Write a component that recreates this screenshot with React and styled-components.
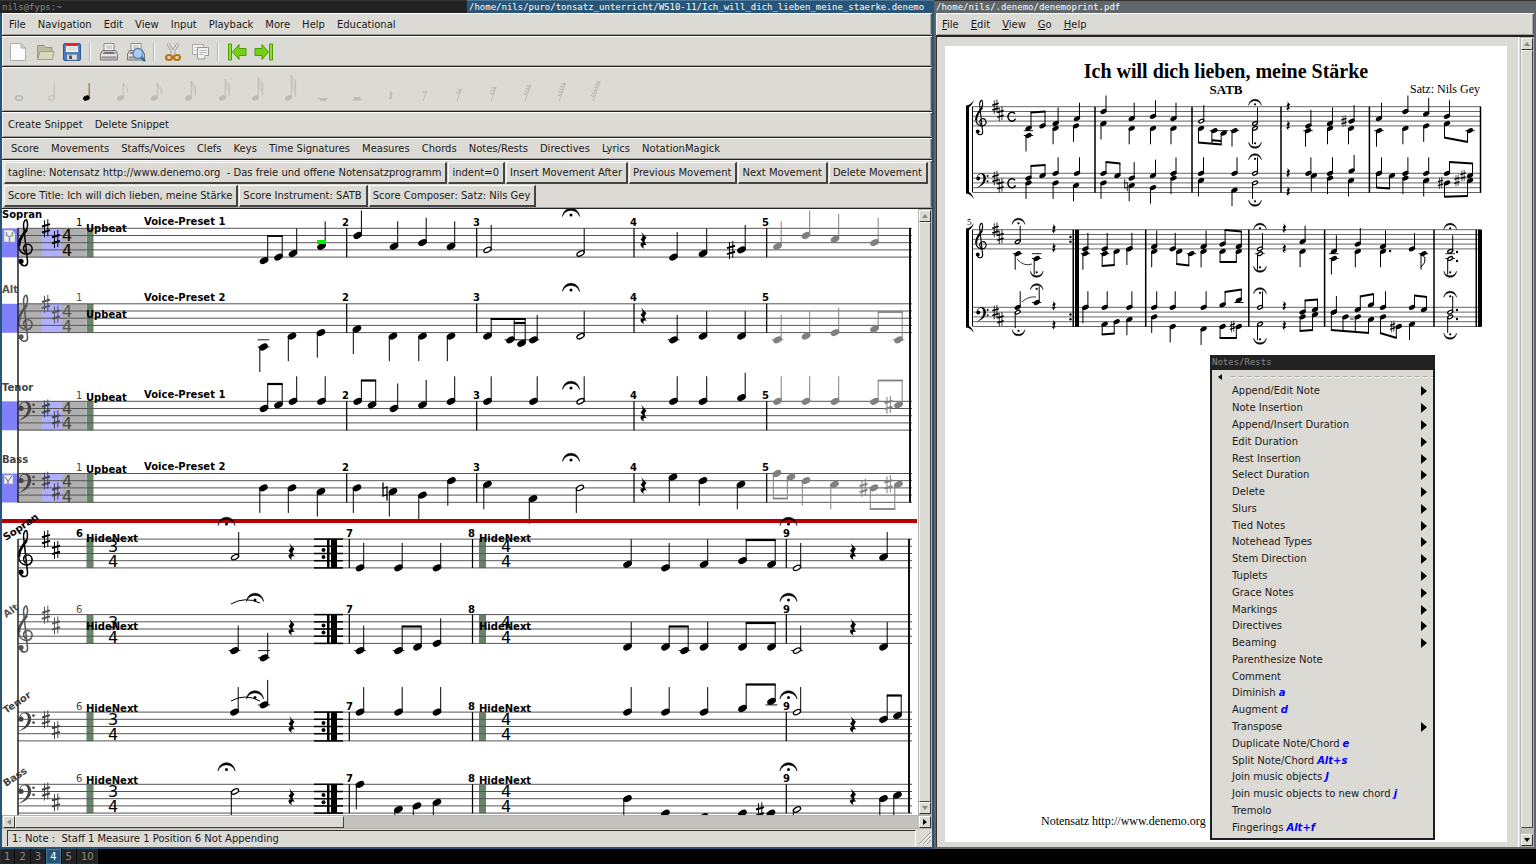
import React from "react";
import styled, { createGlobalStyle, css } from "styled-components";

const Global = createGlobalStyle`
  * { box-sizing: border-box; }
  html, body, #root { height: 100%; }
  body { margin: 0; background: #000; overflow: hidden; }
  button, input { font: inherit; color: inherit; }
`;

const FACE = "#dcdad5";
const UI = `"DejaVu Sans", Verdana, sans-serif`;

const Desktop = styled.div`
  position: relative;
  display: flex;
  flex-direction: column;
  height: 100vh;
  background: #000;
  color: #1a1a1a;
  font: 10px/14px ${UI};
`;
const Windows = styled.main`
  flex: 1;
  min-height: 0;
  display: grid;
  grid-template-columns: 934fr 602fr;
`;
const Pane = styled.section`
  min-width: 0;
  min-height: 0;
  display: flex;
  flex-direction: column;
`;
const Tabs = styled.div`
  display: flex;
  height: 13px;
  flex: none;
`;
const Tab = styled.div`
  flex: 1;
  min-width: 0;
  overflow: hidden;
  white-space: nowrap;
  padding-left: 2px;
  font: 9px/13px "DejaVu Sans Mono", monospace;
  background: ${(p) => p.$bg};
  color: ${(p) => p.$fg};
  border-top: 1px solid ${(p) => p.$edge};
`;
const Frame = styled.div`
  flex: 1;
  min-height: 0;
  display: flex;
  flex-direction: column;
  border: 2px solid ${(p) => p.$edge};
  border-top: 0;
  background: ${FACE};
`;
const bevel = css`
  border-top: 1px solid #fff;
  border-bottom: 1px solid #222;
  box-shadow: inset 1px 0 #f4f3f0, inset 0 -1px #a19f99, inset -1px 0 #5c5b58, inset -2px 0 #a9a7a1;
`;
const Bar = styled.div`
  ${bevel}
  flex: none;
  display: flex;
  align-items: center;
  height: ${(p) => p.$h}px;
  padding: 0 ${(p) => p.$pad ?? 2}px;
  overflow: hidden;
`;
const MenuButton = styled.button`
  border: 0;
  background: none;
  padding: 0 6px;
  line-height: 14px;
  white-space: nowrap;
`;
const ToolButton = styled.button`
  flex: none;
  width: ${(p) => p.$w || 27}px;
  height: 22px;
  border: 0;
  padding: 0;
  background: none;
  display: flex;
  align-items: center;
  justify-content: center;
`;
const Divider = styled.span`
  flex: none;
  width: 2px;
  height: 18px;
  margin: 0 4px;
  background: linear-gradient(90deg, #b3b1ab 50%, #fff 50%);
`;
const Directives = styled.div`
  ${bevel}
  flex: none;
  height: 49px;
  padding: 1px 0 0 2px;
  display: flex;
  flex-direction: column;
  overflow: hidden;
`;
const DirectiveRow = styled.div`
  display: flex;
  height: 23px;
`;
const DirectiveButton = styled.button`
  flex: none;
  height: 22px;
  padding: 0 4px 0 3px;
  margin-right: 1px;
  line-height: 18px;
  white-space: pre;
  background: ${FACE};
  border: 1px solid #fff;
  border-right: 2px solid #444;
  border-bottom: 2px solid #444;
`;
const ScoreArea = styled.div`
  flex: 1;
  min-height: 0;
  display: flex;
  background: #fff;
`;
const Canvas = styled.div`
  flex: 1;
  min-width: 0;
  overflow: hidden;
  svg { display: block; }
`;
const Scroll = styled.div`
  flex: none;
  display: flex;
  flex-direction: ${(p) => (p.$row ? "row" : "column")};
  ${(p) => (p.$row ? "height: 14px;" : "width: 14px;")}
  background: #c3c1bb;
  border: 1px solid #b5b3ad;
`;
const Arrow = styled.button`
  flex: none;
  width: 12px;
  height: 12px;
  padding: 0;
  border: 1px solid #fff;
  border-right-color: #333;
  border-bottom-color: #333;
  background: ${FACE};
  display: flex;
  align-items: center;
  justify-content: center;
`;
const Thumb = styled.div`
  flex: ${(p) => p.$grow} 1 0;
  background: ${FACE};
  border: 1px solid #f4f3f0;
  border-right-color: #444;
  border-bottom-color: #444;
`;
const Track = styled.div`
  flex: ${(p) => p.$grow} 1 0;
`;
const Status = styled.div`
  flex: none;
  height: 18px;
  display: flex;
  align-items: center;
  background: ${FACE};
  padding-left: 5px;
`;
const StatusText = styled.output`
  flex: 1;
  height: 16px;
  padding-left: 4px;
  line-height: 15px;
  white-space: pre;
  border-top: 1px solid #333;
  border-left: 1px solid #333;
  border-right: 1px solid #fff;
  margin-right: 2px;
`;
const Taskbar = styled.nav`
  flex: none;
  height: 15px;
  display: flex;
  gap: 1px;
  background: #000;
`;
const Workspace = styled.button`
  border: 1px solid ${(p) => (p.$on ? "#4c7899" : "#2a2a2a")};
  background: ${(p) => (p.$on ? "#285577" : "#222")};
  color: ${(p) => (p.$on ? "#fff" : "#888")};
  padding: 0 3px;
  line-height: 12px;
`;
const Viewer = styled.div`
  flex: 1;
  min-height: 0;
  display: flex;
  gap: 1px;
  border-top: 1px solid #222;
`;
const PageBed = styled.div`
  flex: 1;
  min-width: 0;
  padding: 9px 11px 5px 8px;
  display: flex;
  border-left: 1px solid #333;
  border-right: 1px solid #fff;
`;
const Sheet = styled.article`
  flex: 1;
  min-width: 0;
  background: #fff;
  color: #000;
  overflow: hidden;
  display: flex;
  flex-direction: column;
  font-family: "Liberation Serif", "Times New Roman", serif;
  svg { display: block; flex: none; }
`;
const Title = styled.h1`
  margin: 14px 0 1px;
  font-size: 20px;
  line-height: 22px;
  text-align: center;
`;
const Credits = styled.div`
  display: grid;
  grid-template-columns: 1fr auto 1fr;
  line-height: 13px;
  padding: 0 27px;
`;
const Instrument = styled.h2`
  grid-column: 2;
  margin: 0;
  font-size: 13px;
  line-height: 13px;
`;
const Composer = styled.span`
  font-size: 12px;
  text-align: right;
`;
const Footer = styled.footer`
  margin-top: auto;
  padding: 0 0 13px 96px;
  font-size: 12px;
  line-height: 15px;
  white-space: pre;
`;
const Popup = styled.aside`
  position: absolute;
  top: 355px;
  right: 101px;
  width: 225px;
  height: 485px;
  display: flex;
  flex-direction: column;
  background: ${FACE};
  border: 2px solid #1c1f20;
  border-top: 0;
`;
const PopupTitle = styled.div`
  flex: none;
  height: 15px;
  background: #222;
  color: #888;
  font: 9px/15px "DejaVu Sans Mono", monospace;
`;
const TearOff = styled.div`
  flex: none;
  height: 13px;
  display: flex;
  align-items: center;
  gap: 8px;
  padding-left: 5px;
  &::after {
    content: "";
    flex: 1;
    height: 2px;
    background:
      repeating-linear-gradient(90deg, #aaa8a2 0 4px, transparent 4px 8px) top / 100% 1px no-repeat,
      repeating-linear-gradient(90deg, #fff 0 4px, transparent 4px 8px) bottom / 100% 1px no-repeat;
  }
`;
const PopupList = styled.ul`
  flex: 1;
  display: flex;
  flex-direction: column;
  margin: 0;
  padding: 0 0 2px;
  list-style: none;
`;
const PopupItem = styled.li`
  flex: 1;
  min-height: 0;
  display: flex;
`;
const PopupButton = styled.button`
  flex: 1;
  border: 0;
  background: none;
  padding: 0 6px 0 20px;
  display: flex;
  align-items: center;
  gap: 3px;
  text-align: left;
  line-height: 14px;
  svg { margin-left: auto; }
`;
const Key = styled.kbd`
  font: italic bold 10px/14px ${UI};
  color: #00f;
`;

/* ---------- notation ---------- */

const parse = (s) =>
  s.trim().split(/\s+/).map((t) => {
    const half = t[0] === "h";
    const [x, step] = (half ? t.slice(1) : t).split(",").map(Number);
    return { x, step, half };
  });

function Head({ x, y, half, r }) {
  return (
    <ellipse
      cx={x} cy={y} rx={half ? r - 0.4 : r + 0.3} ry={half ? r * 0.5 : r * 0.7}
      transform={`rotate(-28 ${x} ${y})`}
      fill={half ? "#fff" : "currentColor"}
      stroke="currentColor" strokeWidth={half ? 1.3 : 0}
    />
  );
}

function Notes({ top, gap, list, down, r = 4.3, len = 25, color = "#000" }) {
  return (
    <g color={color}>
      {parse(list).map(({ x, step, half }, i) => {
        const y = top + step * gap;
        const sx = down ? x - r + 0.6 : x + r - 0.6;
        return (
          <g key={i}>
            <path d={`M${sx} ${y}V${down ? y + len : y - len}`} stroke="currentColor" strokeWidth="1" />
            <Ledgers x={x} step={step} top={top} gap={gap} r={r} />
            <Head x={x} y={y} half={half} r={r} />
          </g>
        );
      })}
    </g>
  );
}

function Ledgers({ x, step, top, gap, r }) {
  const out = [];
  for (let s = 10; s <= step; s += 2) out.push(s);
  for (let s = -2; s >= step; s -= 2) out.push(s);
  return out.map((s) => (
    <path key={s} d={`M${x - r - 1.6} ${top + s * gap}H${x + r + 1.6}`} stroke="currentColor" strokeWidth=".9" />
  ));
}

function Beam({ top, gap, list, y1, y2 = y1, down, r = 4.3, w = 2.2, color = "#000", extra }) {
  const n = parse(list);
  const off = down ? -r + 0.6 : r - 0.6;
  const x1 = n[0].x + off;
  const x2 = n[n.length - 1].x + off;
  const at = (x) => y1 + ((y2 - y1) * (x - x1)) / (x2 - x1);
  return (
    <g color={color}>
      {n.map(({ x, step }, i) => (
        <g key={i}>
          <path d={`M${x + off} ${top + step * gap}V${at(x + off)}`} stroke="currentColor" strokeWidth="1" />
          <Ledgers x={x} step={step} top={top} gap={gap} r={r} />
          <Head x={x} y={top + step * gap} r={r} />
        </g>
      ))}
      <path d={`M${x1 - 0.5} ${y1}L${x2 + 0.5} ${y2}`} stroke="currentColor" strokeWidth={w} />
      {extra && (
        <path d={`M${n[1].x + off} ${at(n[1].x + off) + extra}L${x2} ${y2 + extra}`} stroke="currentColor" strokeWidth={w} />
      )}
    </g>
  );
}

function Staff({ x1, x2, top, gap, color = "#555" }) {
  return [0, 2, 4, 6, 8].map((s) => (
    <path key={s} d={`M${x1} ${top + s * gap}H${x2}`} stroke={color} strokeWidth="1" />
  ));
}

const at = (x, y, k = 1) => `translate(${x} ${y}) scale(${k})`;

function Treble({ x, y, k, color = "#000" }) {
  return (
    <g transform={at(x, y, k)} color={color} fill="none" stroke="currentColor">
      <path strokeWidth="1.5" d="M2 34C4 39 10 38.5 9.5 33L5.6 -2C5.2 -6 7 -9 8.6 -8.4C10.5 -4 9.5 1 5.5 6C1.5 10.5 -.5 14 1 20C3 26.5 11 27.5 13.5 23C15.5 18.5 12 15.3 9 16C5 16.8 4.5 21.5 7.5 24" />
      <path strokeWidth="2.6" d="M8.8 1C6 6 .8 9.5 1 18" />
      <circle cx="3" cy="33" r="2.6" fill="currentColor" stroke="none" />
    </g>
  );
}
function BassClef({ x, y, k, color = "#000" }) {
  return (
    <g transform={at(x, y, k)} fill={color}>
      <path d="M1 7C1 -2 13.5 -2.5 13.2 7C13 13.5 7 17.5 .5 19.5C6 16 9.8 12.5 9.9 6.5C9.9 0 4 -.5 2.5 4Z" />
      <circle cx="3" cy="7" r="2.6" />
      <circle cx="15.5" cy="3.5" r="1.3" />
      <circle cx="15.5" cy="10.5" r="1.3" />
    </g>
  );
}
function Sharp({ x, y, k, color = "#000" }) {
  return (
    <g transform={at(x, y, k)} stroke={color} fill="none">
      <path d="M-1.5 -8V9M1.8 -9V8" strokeWidth="1" />
      <path d="M-4 -1.8L4 -4.2M-4 4.2L4 1.8" strokeWidth="2" />
    </g>
  );
}
function Natural({ x, y, k }) {
  return (
    <path transform={at(x, y, k)} d="M-2 -9V4.5L2 3M2 9V-4.5L-2 -3" stroke="#000" strokeWidth="1.3" fill="none" />
  );
}
const REST = "M-2.5 -8.5L3 -2.5C.2 .5 .8 2 3.4 5C.2 4 -1.2 5 .6 8.5C-4.5 5.5 -3.6 1.8 0 2.6L-3 -1C0 -3.4 -.5 -5 -2.5 -8.5Z";
function Rest({ x, y, k }) {
  return <path transform={at(x, y, k)} d={REST} />;
}
function Fermata({ x, y, k = 1, flip }) {
  return (
    <g transform={`translate(${x} ${y}) scale(${k} ${flip ? -k : k})`}>
      <path d="M-8.5 4.5C-7.5 -6.5 7.5 -6.5 8.5 4.5C6 -3.6 -6 -3.6 -8.5 4.5Z" stroke="#000" strokeWidth=".5" />
      <circle cy="3" r="1.5" />
    </g>
  );
}

const G = 3.6;
const STAVES = [
  { name: "Sopran", top: 228.3, clef: Treble, keys: [0, 3], preset: 1, vp: 225, up: 232, num: 225.5, color: "#000", label: 218 },
  { name: "Alt", top: 303.8, clef: Treble, keys: [0, 3], preset: 2, vp: 301, up: 318, num: 301, color: "#555", label: 293 },
  { name: "Tenor", top: 401.3, clef: BassClef, keys: [2, 5], preset: 1, vp: 398, up: 401, num: 398.5, color: "#444", label: 391 },
  { name: "Bass", top: 473.5, clef: BassClef, keys: [2, 5], preset: 2, vp: 470, up: 473, num: 470.5, color: "#444", label: 463 },
];
const SHIFT = 310.8;

function TimeSig({ x, top, a, b, color = "#000" }) {
  return (
    <g fontSize="16" fontWeight="400" fill={color} textAnchor="middle">
      <text x={x} y={top + 13}>{a}</text>
      <text x={x} y={top + 28}>{b}</text>
    </g>
  );
}

function RepeatBar({ top }) {
  return (
    <g>
      {[0, 2, 4, 6, 8].map((s) => (
        <path key={s} d={`M314 ${top + s * G}H343`} stroke="#000" strokeWidth="1.5" />
      ))}
      <circle cx="323.5" cy={top + 10.8} r="2" />
      <circle cx="323.5" cy={top + 18} r="2" />
      <path d={`M327 ${top}h2.5v28.8h-2.5zM331 ${top}h6v28.8h-6z`} />
    </g>
  );
}

function EditorScore() {
  const [s, a, t, b] = STAVES.map((v) => v.top);
  const [s2, a2, t2, b2] = STAVES.map((v) => v.top + SHIFT);
  const grey = "#808080";
  return (
    <svg width="915" height="606" viewBox="2 209 915 606" fontFamily="DejaVu Sans" fontSize="10" fontWeight="700">
      {STAVES.map((v) => (
        <g key={v.name}>
          <rect x="2" y={v.top} width="16" height="29" fill="#8080ff" />
          <rect x="18" y={v.top} width="68" height="29" fill="#b0b0b0" />
          <rect x="42" y={v.top} width="20" height="29" fill="#b0b0ff" />
          <rect x="86.5" y={v.top} width="7" height="29" fill="#688468" />
          <Staff x1={18} x2={912} top={v.top} gap={G} />
          <v.clef x={18} y={v.top} color={v.color} />
          <Sharp x={46} y={v.top + v.keys[0] * G} color={v.color} />
          <Sharp x={56} y={v.top + v.keys[1] * G} color={v.color} />
          <TimeSig x={67} top={v.top} a="4" b="4" color={v.color} />
          <text x="2" y={v.label} fill={v.color}>{v.name}</text>
          <text x="144" y={v.vp}>{`Voice-Preset ${v.preset}`}</text>
          <text x="86" y={v.up}>Upbeat</text>
          <text x="76" y={v.num} fontWeight="400" fill={v.color}>1</text>
          {[342, 473, 630, 762].map((x, i) => <text key={x} x={x} y={v.num}>{i + 2}</text>)}
          {[346.7, 476.7, 634, 766.7].map((x) => (
            <path key={x} d={`M${x} ${v.top}V${v.top + 29}`} stroke="#000" strokeWidth="1.2" />
          ))}
          <Rest x={643.5} y={v.top + 12} />
        </g>
      ))}
      <path d="M18 228V502.5" stroke="#222" strokeWidth="1.5" />
      <path d="M910 228V502.5" stroke="#111" strokeWidth="2" />
      <path d="M4 230h8l3 3v9h-11z" fill="#eee" stroke="#999" strokeWidth=".5" />
      <path d="M6.5 232v3l3 2l3 -2v-3M9.5 237v5" stroke="#89a" fill="none" strokeWidth="1.5" />
      <path d="M4 475h9v9h-9z" fill="#eee" stroke="#999" strokeWidth=".5" />
      <path d="M5 477l3 4 4 -5M8 481v3" stroke="#567" fill="none" />

      <Beam top={s} gap={G} list="264,9 278.5,8" y1={236} w={1.8} />
      <Notes top={s} gap={G} list="293,7 321.5,5 357.7,2 394,5 422.5,4 451,5 h487.5,6 h580.5,7 673.5,8 703,7 741.5,6" />
      <rect x="317" y="240" width="9" height="4" fill="#0e0" />
      <Sharp x={731} y={s + 6 * G} />
      <Notes top={s} gap={G} color={grey} list="777.5,5 806,2 835,3 874.5,4" />
      <Fermata x={571} y={212} />

      <Notes top={a} gap={G} down list="263.5,12 292,9 321,8 357,7 393,9 422.5,9 451,9" />
      <Beam top={a} gap={G} list="487.5,9 510.5,10 521.5,11" y1={319} extra={4} />
      <Notes top={a} gap={G} list="533.5,10 h580.5,9 673.5,10 703,9 741.5,9" />
      <Notes top={a} gap={G} color={grey} list="777.5,10 806,9 835,8" />
      <Beam top={a} gap={G} color={grey} list="874.5,7 898.5,10" y1={312} w={1.8} />
      <Fermata x={571} y={287} />

      <Beam top={t} gap={G} list="264,2 278.5,1" y1={384} />
      <Notes top={t} gap={G} list="293,0 321.5,0 394,2 422.5,1 451,0 487.5,0 533.5,0 h580.5,0 673.5,0 703,0 741.5,-1" />
      <Beam top={t} gap={G} list="357.7,0 372,1" y1={380.5} />
      <Notes top={t} gap={G} color={grey} list="777.5,0 806,0 835,0" />
      <Beam top={t} gap={G} color={grey} list="874.5,0 898.5,1" y1={380.5} w={1.8} />
      <Sharp x={888.5} y={t + G} color={grey} />
      <Fermata x={571} y={385} />

      <Notes top={b} gap={G} down list="263.5,4 292,4 321,5 357,4 393,5 422.5,6 451.5,2 487.5,3 533,7 h580,4 673,1 703,2 741,3" />
      <Natural x={385} y={b + 5 * G} />
      <Beam top={b} gap={G} down color={grey} list="777,0 791,1" y1={498.5} w={1.8} />
      <Notes top={b} gap={G} down color={grey} list="806,2 834.5,3" />
      <Sharp x={863.5} y={b + 4 * G} color={grey} />
      <Sharp x={888.5} y={b + 3 * G} color={grey} />
      <Beam top={b} gap={G} down color={grey} list="874,4 898.5,3" y1={509} w={1.8} />
      <Fermata x={571} y={457} />

      <path d="M2 521H917" stroke="#b80000" strokeWidth="4" />

      {STAVES.map((v, i) => {
        const top = v.top + SHIFT;
        const hide = [542, 629.5, 711.5, 783.5][i];
        return (
          <g key={v.name}>
            <rect x="86.5" y={top} width="7" height="29" fill="#688468" />
            <rect x="479" y={top} width="7" height="29" fill="#688468" />
            <Staff x1={18} x2={912} top={top} gap={G} />
            <v.clef x={18} y={top} color={v.color} />
            <Sharp x={46} y={top + v.keys[0] * G} color={v.color} />
            <Sharp x={56} y={top + v.keys[1] * G} color={v.color} />
            <text transform={`translate(6 ${[541, 618, 714, 787][i]}) rotate(-34)`} fill={v.color}>{v.name}</text>
            <text x="86" y={hide}>HideNext</text>
            <text x="479" y={hide}>HideNext</text>
            <TimeSig x={113} top={top} a="3" b="4" />
            <TimeSig x={506} top={top} a="4" b="4" />
            <text x="76" y={top - 2} fontWeight={i ? 400 : 700} fill={v.color}>6</text>
            <text x="346" y={top - 2}>7</text>
            <text x="468" y={top - 2}>8</text>
            <text x="783" y={top - 2}>9</text>
            {[349.3, 472.5, 786.3].map((x) => (
              <path key={x} d={`M${x} ${top}V${top + 29}`} stroke="#000" strokeWidth="1.2" />
            ))}
            <RepeatBar top={top} />
            <Rest x={291.5} y={top + 12.5} />
            <Rest x={853} y={top + 12.5} />
            <Fermata x={788.5} y={[521, 597, 694.5, 766.5][i]} />
          </g>
        );
      })}
      <path d="M18 539V815" stroke="#222" strokeWidth="1.5" />
      <path d="M909 539V813" stroke="#111" strokeWidth="2" />
      <Fermata x={226.5} y={521} />
      <Fermata x={255} y={597} />
      <Fermata x={255} y={694.5} />
      <Fermata x={226.5} y={766.5} />
      <path d="M231 604Q245 596 260 603M231 701Q245 693 260 701" stroke="#000" fill="none" />

      <Notes top={s2} gap={G} list="h235,5 360,8 398.5,8 437,8 627.5,7 665.5,8 704,7 h797,8 883.5,5" />
      <Beam top={s2} gap={G} list="742.5,6 771.5,7" y1={540} />

      <Notes top={a2} gap={G} list="234.5,10 264,12 360,10 437,8 627.5,9 704,9 h797,10 883.5,9" />
      <Beam top={a2} gap={G} list="398.5,10 417.5,9" y1={626.5} />
      <Beam top={a2} gap={G} list="665.5,9 684.5,10" y1={626.5} />
      <Beam top={a2} gap={G} list="742.5,9 771.5,9" y1={623} />

      <Notes top={t2} gap={G} list="234.5,0 264,-2 360,0 398.5,0 437,0 627.5,0 665.5,0 704,0 h797,0" />
      <Beam top={t2} gap={G} list="742.5,-1 771.5,-3" y1={684.5} />
      <Beam top={t2} gap={G} list="883.5,2 897.5,1" y1={695.5} />

      <Notes top={b2} gap={G} down list="h235,2 360,0 398.5,7 417,6 437,5 627.5,4 665.5,8 704,9 742.5,8 771,8 h797,7 883.5,4 897.5,3" />
      <Sharp x={760} y={b2 + 7.5 * G} />
    </svg>
  );
}

const P = { gap: 2.4, r: 3.1, len: 16 };
const PK = 0.66;

function Voice({ top, up, down }) {
  return (
    <>
      {up && <Notes {...P} top={top} list={up} />}
      {down && <Notes {...P} top={top} list={down} down />}
    </>
  );
}
function Rests({ list, k = 0.58 }) {
  return parse(list).map(({ x, step }, i) => <Rest key={i} x={x} y={step} k={k} />);
}

function PrintSystem({ top, bass, bars, end }) {
  return (
    <>
      <Staff x1={972.5} x2={1481} top={top} gap={2.4} color="#666" />
      <Staff x1={972.5} x2={1481} top={bass} gap={2.4} color="#666" />
      <path d={`M967.5 ${top - 1}V${bass + 20}`} stroke="#000" strokeWidth="3" />
      <path d={`M966 ${top - 1}Q971 ${top - 2} 974 ${top - 7}Q972 ${top} 966 ${top + 2}ZM966 ${bass + 20}Q971 ${bass + 21} 974 ${bass + 26}Q972 ${bass + 19} 966 ${bass + 17}Z`} />
      <path d={`M972.5 ${top}V${bass + 19}`} stroke="#000" />
      {bars.map((x) => <path key={x} d={`M${x} ${top}V${bass + 19.5}`} stroke="#000" strokeWidth="1.5" />)}
      {end}
      <Treble x={975.5} y={top} k={0.75} />
      <BassClef x={976} y={bass} k={0.75} />
      <Sharp x={995.5} y={top} k={0.8} />
      <Sharp x={1000.5} y={top + 7.2} k={0.8} />
      <Sharp x={995.5} y={bass + 4.8} k={0.8} />
      <Sharp x={1000.5} y={bass + 12} k={0.8} />
    </>
  );
}

function CommonTime({ y }) {
  return (
    <path transform={at(1008, y)} d="M7 -2.5A4 4.5 0 1 0 7.5 2.5" fill="none" stroke="#000" strokeWidth="1.5" />
  );
}

function PrintScore() {
  const t1 = 106.7, b1 = 173.3, t2 = 229.7, b2 = 307.3;
  const beam = { gap: 2.4, r: 3.1, w: 2 };
  return (
    <svg width="563" height="254" viewBox="945 96 563 254" fontFamily="Liberation Serif" fontSize="9" overflow="visible">
      <PrintSystem top={t1} bass={b1} bars={[1095, 1192, 1281, 1369.4, 1480.5]} />
      <CommonTime y={t1 + 9.6} />
      <CommonTime y={b1 + 9.6} />
      <Voice
        top={t1}
        up="1055.6,7 1077,5 1103.5,2 1131.7,5 1153,4 1173.5,5 h1201.3,6 h1255,7 1308.4,8 1330,7 1351.6,6 1379,5 1405.4,2 1426.2,3 1447,4"
        down="1028.5,12 1055.6,9 1076,8 1103.5,7 1131.7,9 1153,9 1173.5,9 1234.5,10 h1255,9 1308,10 1330,9 1351,9 1379,10 1405.4,9 1426.2,8"
      />
      <Beam {...beam} top={t1} list="1028.5,9 1042.5,8" y1={112.5} y2={111.5} />
      <Beam {...beam} top={t1} down list="1201,9 1214.4,10 1223.7,11" y1={142.5} y2={144.5} extra={-3.5} />
      <Beam {...beam} top={t1} down list="1447,7 1470,10" y1={137.5} y2={142} />
      <Sharp x={1344} y={t1 + 14.4} k={PK} />
      <Fermata x={1255} y={102} k={0.75} />
      <Fermata x={1255} y={145.5} k={0.75} flip />
      <Rests list="1288.3,106 1288.3,125 1288.3,172.5 1288.3,191" />
      <Voice
        top={b1}
        up="1055.6,0 1077,0 1131.7,2 1153,1 1173.5,0 1201,0 1234.5,0 h1255,0 1308.4,0 1330,0 1351.6,-1 1379,0 1405.4,0 1426.2,0"
        down="1028.5,4 1055.6,4 1076,5 1103.5,4 1131.7,5 1153,6 1173.5,2 1201,3 1234.5,7 h1255,4 1313.8,1 1330,2 1351,3 1405.4,2 1426.2,3"
      />
      <Beam {...beam} top={b1} list="1028.5,2 1042.5,1" y1={166} y2={165} />
      <Beam {...beam} top={b1} list="1103.5,0 1117.4,1" y1={162} y2={163.5} />
      <Beam {...beam} top={b1} list="1447,0 1470,1" y1={162} y2={163.5} />
      <Beam {...beam} top={b1} down list="1379,0 1392,1" y1={187.5} y2={188.5} />
      <Beam {...beam} top={b1} down list="1447,4 1470,3" y1={196.7} y2={196} />
      <Natural x={1126} y={b1 + 12} k={PK} />
      <Sharp x={1440.5} y={b1 + 9.6} k={PK} />
      <Sharp x={1457} y={b1 + 7.2} k={PK} />
      <Sharp x={1463} y={b1 + 2.4} k={PK} />
      <Fermata x={1255} y={156.5} k={0.75} />
      <Fermata x={1255} y={203.5} k={0.75} flip />

      <text x="967" y="225">5</text>
      <PrintSystem
        top={t2}
        bass={b2}
        bars={[1145.7, 1248.8, 1324.6, 1434]}
        end={
          <path d={`M1072.5 ${t2}h1.5v97h-1.5zM1075 ${t2}h4v97h-4zM1475.5 ${t2}h1.5v97h-1.5zM1478 ${t2}h4v97h-4z`} />
        }
      />
      {[t2 + 7.2, t2 + 12, b2 + 7.2, b2 + 12].map((y) => <circle key={y} cx="1070.5" cy={y} r="1.2" />)}
      <Voice
        top={t2}
        up="h1017.7,5 1085.4,8 1104.7,8 1129.4,8 1154.2,7 1172.7,8 1203.6,7 h1260,8 1302.6,5 1333.9,9 1357.8,6 1383,7 1412,8 h1450.2,9"
        down="1017.7,10 1036.7,12 1085.4,10 1129.4,8 1154.2,9 1203.6,9 h1260,10 1302.6,9 1333.9,12 1357.8,9 1383,9 1423.5,10 h1450.2,12"
      />
      <Beam {...beam} top={t2} down list="1104.7,10 1116.7,9" y1={266} y2={265} />
      <Beam {...beam} top={t2} down list="1179.3,9 1191.3,10" y1={264} y2={265.5} />
      <Beam {...beam} top={t2} list="1222.6,6 1238.8,7" y1={230} y2={231.5} />
      <Beam {...beam} top={t2} down list="1222.6,9 1238.8,9" y1={262} />
      <Rests list="1054,228.5 1054,247.5 1284.4,228 1284.4,248 1054,305.5 1054,324.5 1284.4,305.5 1284.4,325" />
      <path d="M1017 259Q1024 267 1032 264M1022 302Q1028 296 1036 297M1350 319h4" fill="none" stroke="#000" strokeWidth=".8" />
      <path d="M1421 267q5 -4 4 -9q-2 -3 -4 -4" fill="none" stroke="#000" />
      {[[1390, 251], [1457, 252], [1457, 261], [1457, 310], [1457, 319]].map(([x, y]) => (
        <circle key={`${x}-${y}`} cx={x} cy={y} r="1.2" />
      ))}
      <Voice
        top={b2}
        up="1017.7,0 1036.7,-2 1085.4,0 1104.7,0 1129.4,0 1154.2,0 1172.7,0 1203.6,0 h1260,0 1333.9,2 1383,0 h1450.2,2"
        down="h1017.7,2 1085.4,0 1129.4,5 1154.2,4 1172.7,8 1203.6,9 h1260,7 1412,7 h1450.2,4"
      />
      <Beam {...beam} top={b2} down list="1104.7,7 1116.7,6" y1={334.5} y2={333.5} />
      <Beam {...beam} top={b2} list="1222.6,-1 1238.8,-3" y1={292} y2={289.5} />
      <Beam {...beam} top={b2} down list="1222.6,8 1238.8,8" y1={338} />
      <Beam {...beam} top={b2} list="1302.6,2 1315,1" y1={300.5} y2={299.5} />
      <Beam {...beam} top={b2} down list="1302.6,4 1315,3" y1={331} y2={330} />
      <Beam {...beam} top={b2} list="1357.8,1 1371,-1" y1={296.5} y2={294} />
      <Beam {...beam} top={b2} list="1412,0 1424,1" y1={295.5} y2={297} />
      <Beam {...beam} top={b2} down list="1333.9,2 1345.5,4 1357.8,4 1371,5" y1={330} y2={333} />
      <Beam {...beam} top={b2} down list="1383,4 1398.8,8" y1={333} y2={338} />
      <Sharp x={1232.5} y={b2 + 19.2} k={PK} />
      <Sharp x={1392.6} y={b2 + 19.2} k={PK} />
      {[[1018.5, 221], [1260, 226], [1450.2, 226], [1036.7, 286.5], [1260, 290.5], [1450.2, 294]].map(([x, y]) => (
        <Fermata key={`${x}-${y}`} x={x} y={y} k={0.75} />
      ))}
      {[[1036.7, 274.5], [1260, 269.5], [1450.2, 274.5], [1018.5, 333], [1260, 341.5], [1450.2, 336.5]].map(([x, y]) => (
        <Fermata key={`${x}-${y}`} x={x} y={y} k={0.75} flip />
      ))}
    </svg>
  );
}

/* ---------- toolbar icons ---------- */

const Icon = ({ children }) => (
  <svg width="20" height="20" viewBox="0 0 20 20" aria-hidden="true">{children}</svg>
);
const printer = (
  <>
    <path d="M5 1.5h10v8H5z" fill="#f6f6f4" stroke="#888" />
    <path d="M7 4h6M7 6h6" stroke="#aaa" />
    <path d="M3.5 8.5L1.5 12v6h17v-6l-2 -3.5z" fill="#c9c9c7" stroke="#777" />
    <path d="M2 13h16" stroke="#fff" />
    <path d="M5 10h10l1 2H4z" fill="#777" />
    <path d="M3 15.5h14" stroke="#999" strokeWidth="2" />
  </>
);
const post = (x) => <path d={`M${x} 2h3v16h-3z`} fill="#8ae234" stroke="#4e9a06" />;
const ICONS = {
  New: <path d="M2.5 1.5H13L17.5 6V18.5H2.5ZM13 1.5V6H17.5" fill="#fdfdfd" stroke="#aaa" />,
  Open: (
    <>
      <path d="M2.5 17.5V3.5H9L10.5 5.5H17V9" fill="#b9bd9c" stroke="#969a78" />
      <path d="M2.5 17.5L5 9.5H19L17.5 17.5Z" fill="#d5d8bd" stroke="#a0a482" />
    </>
  ),
  Save: (
    <>
      <rect x="1.5" y="1.5" width="17" height="17" rx="1.5" fill="#4a7cc0" stroke="#2c5898" />
      <path d="M4 2h12v8H4z" fill="#fff" />
      <path d="M4 1h12v3H4z" fill="#e22" />
      <path d="M5 6h10M5 8h10" stroke="#bbb" />
      <path d="M5 12.5h10V18H5z" fill="#ddd" stroke="#888" strokeWidth=".5" />
      <path d="M7 13.5h3V17H7z" fill="#456" />
    </>
  ),
  Print: printer,
  "Print preview": (
    <>
      {printer}
      <path d="M15 15l4 4" stroke="#3465a4" strokeWidth="2.5" />
      <circle cx="12" cy="11.5" r="5" fill="#a9cbed" stroke="#5b83b5" strokeWidth="1.3" />
    </>
  ),
  Cut: (
    <>
      <path d="M5 1.5L11.5 13M15 1.5L8.5 13" stroke="#999" strokeWidth="3" />
      <path d="M5 1.5L11.5 13M15 1.5L8.5 13" stroke="#eee" strokeWidth="1.3" />
      <ellipse cx="6" cy="15.5" rx="3" ry="2.5" fill="none" stroke="#b87414" strokeWidth="2.2" />
      <ellipse cx="14" cy="15.5" rx="3" ry="2.5" fill="none" stroke="#b87414" strokeWidth="2.2" />
    </>
  ),
  Copy: (
    <>
      <path d="M2.5 2.5h11v10h-11z" fill="#eee" stroke="#aaa" />
      <path d="M7.5 5.5h11v8l-3.5 3.5h-7.5z" fill="#eee" stroke="#999" />
      <path d="M9.5 8.5h7M9.5 10.5h7M9.5 12.5h4M4.5 5.5h2M4.5 8.5h2" stroke="#bbb" />
      <path d="M15 17v-3.5h3.5" fill="#fff" stroke="#999" />
    </>
  ),
  "Go to start": (
    <>
      {post(1.5)}
      <path d="M5.5 10L12 2.5V6.5H19V13.5H12V17.5Z" fill="#73d216" stroke="#4e9a06" />
    </>
  ),
  "Go to end": (
    <>
      {post(15.5)}
      <path d="M14.5 10L8 2.5V6.5H1V13.5H8V17.5Z" fill="#73d216" stroke="#4e9a06" />
    </>
  ),
};

const SEP = "|";
const TOOLS = ["New", "Open", "Save", SEP, "Print", "Print preview", SEP, "Cut", "Copy", SEP, "Go to start", "Go to end"];

function NoteIcon({ flags, half, whole, on }) {
  const c = on ? "#000" : "#bcbbb8";
  const top = flags > 2 ? 13 - (flags - 2) * 2 : 13;
  return (
    <svg width="22" height="40" viewBox="0 0 22 40" aria-hidden="true">
      {whole ? (
        <ellipse cx="11" cy="28" rx="3.5" ry="2.2" fill="none" stroke={c} strokeWidth="1.8" />
      ) : (
        <>
          <ellipse cx="9.5" cy="28" rx="3" ry="2" transform="rotate(-20 9.5 28)" fill={half ? "none" : c} stroke={c} />
          <path d={`M12.2 27V${top}`} stroke={on ? "#a0522d" : c} />
          {Array.from({ length: flags || 0 }, (_, i) => (
            <path key={i} d={`M12.2 ${top + i * 2.4}q1 3 4 5q1.2 3 -.2 5`} fill="none" stroke={c} strokeWidth=".8" />
          ))}
        </>
      )}
    </svg>
  );
}
function RestIcon({ n }) {
  const c = "#bcbbb8";
  return (
    <svg width="22" height="40" viewBox="0 0 22 40" aria-hidden="true">
      {n < 0 && <path d={n === -3 ? "M6 28.5H16M8 29.5H14V30.5H8" : "M6 30H16M8 27.5H14V29.5H8"} stroke={c} fill={c} />}
      {n === 0 && <path d={REST} fill={c} transform="translate(11 25) scale(.62)" />}
      {n > 0 && (
        <g stroke={c} fill="none">
          <path d={`M9 31L${12 + n * 0.7} ${23 - n * 2}`} />
          {Array.from({ length: n }, (_, i) => {
            const y = 23 - n * 2 + i * 2.8;
            const x = 12 + n * 0.7 - i;
            return <path key={i} d={`M${x - 4} ${y}q1.5 2.5 4 0`} strokeWidth="1.3" />;
          })}
        </g>
      )}
    </svg>
  );
}

const FILE_MENU = ["File", "Navigation", "Edit", "View", "Input", "Playback", "More", "Help", "Educational"];
const SCORE_MENU = ["Score", "Movements", "Staffs/Voices", "Clefs", "Keys", "Time Signatures", "Measures", "Chords", "Notes/Rests", "Directives", "Lyrics", "NotationMagick"];
const ROW1 = ["tagline: Notensatz http://www.denemo.org  - Das freie und offene Notensatzprogramm", "indent=0", "Insert Movement After", "Previous Movement", "Next Movement", "Delete Movement"];
const ROW2 = ["Score Title: Ich will dich lieben, meine Stärke", "Score Instrument: SATB", "Score Composer: Satz: Nils Gey"];
const SUB = true;
const POPUP = [
  ["Append/Edit Note", SUB], ["Note Insertion", SUB], ["Append/Insert Duration", SUB], ["Edit Duration", SUB],
  ["Rest Insertion", SUB], ["Select Duration", SUB], ["Delete", SUB], ["Slurs", SUB], ["Tied Notes", SUB],
  ["Notehead Types", SUB], ["Stem Direction", SUB], ["Tuplets", SUB], ["Grace Notes", SUB], ["Markings", SUB],
  ["Directives", SUB], ["Beaming", SUB], ["Parenthesize Note"], ["Comment"], ["Diminish", "a"], ["Augment", "d"],
  ["Transpose", SUB], ["Duplicate Note/Chord", "e"], ["Split Note/Chord", "Alt+s"], ["Join music objects", "J"],
  ["Join music objects to new chord", "j"], ["Tremolo"], ["Fingerings", "Alt+f"],
];

const Tri = ({ dir, color = "#000" }) => {
  const d = { up: "M0 5L3 1L6 5Z", down: "M0 1L3 5L6 1Z", left: "M5 0L1 3L5 6Z", right: "M1 0L5 3L1 6Z" }[dir];
  return <svg width="6" height="6" viewBox="0 0 6 6" aria-hidden="true"><path d={d} fill={color} /></svg>;
};

export default function App() {
  return (
    <Desktop>
      <Global />
      <Windows>
        <Pane>
          <Tabs>
            <Tab $bg="#222" $fg="#888" $edge="#333">nils@fyps:~</Tab>
            <Tab $bg="#285577" $fg="#fff" $edge="#4c7899">/home/nils/puro/tonsatz_unterricht/WS10-11/Ich_will_dich_lieben_meine_staerke.denemo</Tab>
          </Tabs>
          <Frame $edge="#285577">
            <Bar $h={23} $pad={1}>{FILE_MENU.map((m) => <MenuButton key={m}>{m}</MenuButton>)}</Bar>
            <Bar $h={31}>
              {TOOLS.map((t, i) =>
                t === SEP ? <Divider key={i} /> : <ToolButton key={t} aria-label={t}><Icon>{ICONS[t]}</Icon></ToolButton>
              )}
            </Bar>
            <Bar $h={45}>
              <ToolButton $w={30} aria-label="Whole note"><NoteIcon whole /></ToolButton>
              <ToolButton $w={37} aria-label="Half note"><NoteIcon half /></ToolButton>
              <ToolButton $w={34} aria-label="Quarter note"><NoteIcon on /></ToolButton>
              {[1, 2, 3, 4, 5, 6].map((n) => (
                <ToolButton $w={n > 3 ? 33 : 34} key={n} aria-label={`Note with ${n} flags`}><NoteIcon flags={n} /></ToolButton>
              ))}
              {[-3, -2, 0, 1, 2, 3, 4, 5, 6].map((n) => (
                <ToolButton $w={34} key={n} aria-label={`Rest ${n}`}><RestIcon n={n} /></ToolButton>
              ))}
            </Bar>
            <Bar $h={26} $pad={0}>
              <MenuButton>Create Snippet</MenuButton>
              <MenuButton>Delete Snippet</MenuButton>
            </Bar>
            <Bar $h={22} $pad={3}>{SCORE_MENU.map((m) => <MenuButton key={m}>{m}</MenuButton>)}</Bar>
            <Directives>
              <DirectiveRow>{ROW1.map((t) => <DirectiveButton key={t}>{t}</DirectiveButton>)}</DirectiveRow>
              <DirectiveRow>{ROW2.map((t) => <DirectiveButton key={t}>{t}</DirectiveButton>)}</DirectiveRow>
            </Directives>
            <ScoreArea>
              <Canvas><EditorScore /></Canvas>
              <Scroll>
                <Arrow aria-label="Scroll up"><Tri dir="up" color="#888" /></Arrow>
                <Thumb $grow={1} />
                <Arrow aria-label="Scroll down"><Tri dir="down" color="#888" /></Arrow>
              </Scroll>
            </ScoreArea>
            <Scroll $row>
              <Arrow aria-label="Scroll left"><Tri dir="left" color="#888" /></Arrow>
              <Thumb $grow={328} />
              <Track $grow={576} />
              <Arrow aria-label="Scroll right"><Tri dir="right" /></Arrow>
            </Scroll>
            <Status>
              <StatusText>1: Note :  Staff 1 Measure 1 Position 6 Not Appending</StatusText>
              <svg width="14" height="14" viewBox="0 0 14 14" aria-hidden="true">
                <path d="M1 13L13 1M5 13L13 5M9 13L13 9" stroke="#999" />
                <path d="M2.5 13L13 2.5M6.5 13L13 6.5" stroke="#fff" />
              </svg>
            </Status>
          </Frame>
        </Pane>
        <Pane>
          <Tabs>
            <Tab $bg="#5f676a" $fg="#fff" $edge="#333">/home/nils/.denemo/denemoprint.pdf</Tab>
          </Tabs>
          <Frame $edge="#5f676a">
            <Bar $h={23} $pad={0}>
              {["File", "Edit", "View", "Go", "Help"].map((m) => (
                <MenuButton key={m}><u>{m[0]}</u>{m.slice(1)}</MenuButton>
              ))}
            </Bar>
            <Viewer>
              <PageBed>
                <Sheet>
                  <Title>Ich will dich lieben, meine Stärke</Title>
                  <Credits>
                    <Instrument>SATB</Instrument>
                    <Composer>Satz: Nils Gey</Composer>
                  </Credits>
                  <PrintScore />
                  <Footer>Notensatz http://www.denemo.org  -</Footer>
                </Sheet>
              </PageBed>
              <Scroll>
                <Arrow aria-label="Page up"><Tri dir="up" color="#888" /></Arrow>
                <Thumb $grow={780} />
                <Track $grow={6} />
                <Arrow aria-label="Page down"><Tri dir="down" /></Arrow>
              </Scroll>
            </Viewer>
          </Frame>
        </Pane>
      </Windows>
      <Taskbar aria-label="Workspaces">
        {["1", "2", "3", "4", "5", "10"].map((w) => <Workspace key={w} $on={w === "4"}>{w}</Workspace>)}
      </Taskbar>
      <Popup>
        <PopupTitle>Notes/Rests</PopupTitle>
        <TearOff><Tri dir="left" /></TearOff>
        <PopupList>
          {POPUP.map(([label, extra]) => (
            <PopupItem key={label}>
              <PopupButton>
                <span>{label}</span>
                {typeof extra === "string" && <Key>{extra}</Key>}
                {extra === SUB && (
                  <svg width="6" height="10" viewBox="0 0 6 10" aria-hidden="true"><path d="M0 0L6 5L0 10Z" /></svg>
                )}
              </PopupButton>
            </PopupItem>
          ))}
        </PopupList>
      </Popup>
    </Desktop>
  );
}
